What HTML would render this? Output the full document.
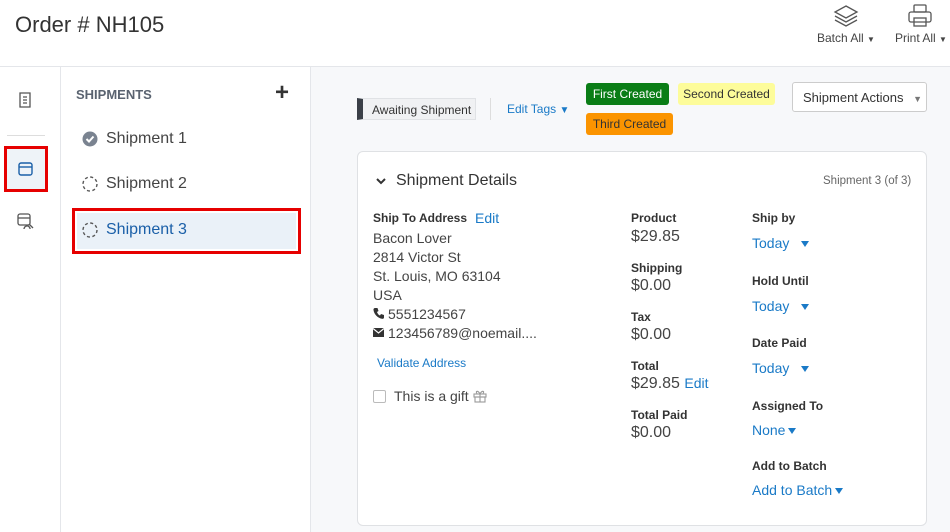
<!DOCTYPE html>
<html><head><style>
*{box-sizing:border-box;margin:0;padding:0}
body{width:950px;height:532px;overflow:hidden;font-family:"Liberation Sans",Arial,sans-serif;background:#fff;position:relative;color:#333}
.a{position:absolute}
.blue{color:#1a7ac7}
.lbl{font-size:12px;font-weight:bold;color:#333}
.val{font-size:16px;color:#444}
.tri{display:inline-block;width:0;height:0;border-left:4px solid transparent;border-right:4px solid transparent;border-top:6px solid #1a7ac7;vertical-align:middle;margin-left:6px}
</style></head><body>
<div class="a" style="left:15px;top:12px;font-size:22px;color:#333">Order # NH105</div>
<svg class="a" style="left:833px;top:3px" width="26" height="26" viewBox="0 0 26 26" fill="none" stroke="#555" stroke-width="1.3"><path d="M13 3L24 9L13 15L2 9Z"/><path d="M2 13L13 19L24 13"/><path d="M2 17L13 23L24 17"/></svg>
<div class="a" style="left:817px;top:31px;font-size:12px;color:#444">Batch All <span style="font-size:8px">▼</span></div>
<svg class="a" style="left:907px;top:3px" width="26" height="26" viewBox="0 0 26 26" fill="none" stroke="#555" stroke-width="1.3"><rect x="7" y="2" width="12" height="7" rx="1"/><rect x="2" y="9" width="22" height="10" rx="2"/><rect x="7" y="15" width="12" height="8"/></svg>
<div class="a" style="left:895px;top:31px;font-size:12px;color:#444">Print All <span style="font-size:8px">▼</span></div>
<div class="a" style="left:0;top:66px;width:950px;height:1px;background:#e4e6ea"></div>
<div class="a" style="left:60px;top:67px;width:1px;height:465px;background:#e4e6ea"></div>
<div class="a" style="left:310px;top:67px;width:640px;height:465px;background:#f7f8fa;border-left:1px solid #e4e6ea"></div>
<svg class="a" style="left:18px;top:92px" width="14" height="16" viewBox="0 0 14 16" fill="none" stroke="#555" stroke-width="1.3"><path d="M2 1H12V15H2Z"/><path d="M5 5H9M5 8H9M5 11H9"/></svg>
<div class="a" style="left:7px;top:135px;width:38px;height:1px;background:#ddd"></div>
<div class="a" style="left:4px;top:146px;width:44px;height:46px;border:3px solid #e60000;background:#eef3f8"></div>
<svg class="a" style="left:18px;top:162px" width="15" height="14" viewBox="0 0 15 14" fill="none" stroke="#1a5fa8" stroke-width="1.4"><rect x="1" y="1" width="13" height="12" rx="2"/><path d="M1 5H14"/></svg>
<svg class="a" style="left:17px;top:213px" width="17" height="16" viewBox="0 0 17 16" fill="none" stroke="#555" stroke-width="1.3"><rect x="1" y="1" width="12" height="11" rx="2"/><path d="M1 5H13"/><path d="M16 15L12 11M10 13a3 3 0 1 0 0.1 0"/></svg>
<div class="a" style="left:76px;top:87px;font-size:13px;font-weight:bold;color:#5a6370">SHIPMENTS</div>
<div class="a" style="left:275px;top:80px;font-size:24px;font-weight:bold;color:#333;line-height:26px">+</div>
<svg class="a" style="left:82px;top:131px" width="16" height="16"><circle cx="8" cy="8" r="7.5" fill="#7a8390"/><path d="M4.5 8L7 10.5L11.5 5.5" stroke="#fff" stroke-width="2" fill="none"/></svg>
<div class="a" style="left:106px;top:130px;font-size:16px;color:#444">Shipment 1</div>
<svg class="a" style="left:82px;top:176px" width="16" height="16"><circle cx="8" cy="8" r="7" fill="none" stroke="#555" stroke-width="1.4" stroke-dasharray="3 2.5"/></svg>
<div class="a" style="left:106px;top:175px;font-size:16px;color:#444">Shipment 2</div>
<div class="a" style="left:72px;top:208px;width:229px;height:46px;border:3px solid #e60000;background:#fff"><div style="margin:2px;height:36px;background:#eaf1f8"></div></div>
<svg class="a" style="left:82px;top:222px" width="16" height="16"><circle cx="8" cy="8" r="7" fill="none" stroke="#555" stroke-width="1.4" stroke-dasharray="3 2.5"/></svg>
<div class="a" style="left:106px;top:221px;font-size:16px;color:#1a5fa8">Shipment 3</div>
<div class="a" style="left:357px;top:98px;width:119px;height:22px;background:#f0f1f3;border:1px solid #e0e2e5;border-left:6px solid #3a3f47;font-size:12px;color:#333;padding:4px 0 0 9px">Awaiting Shipment</div>
<div class="a" style="left:490px;top:98px;width:1px;height:22px;background:#ddd"></div>
<div class="a blue" style="left:507px;top:102px;font-size:12px">Edit Tags <span style="font-size:10px">▼</span></div>
<div class="a" style="left:586px;top:83px;width:83px;height:22px;background:#0a7d16;border-radius:3px;color:#fff;font-size:12px;text-align:center;line-height:22px">First Created</div>
<div class="a" style="left:678px;top:83px;width:97px;height:22px;background:#fdfc9a;border-radius:3px;color:#333;font-size:12px;text-align:center;line-height:22px">Second Created</div>
<div class="a" style="left:586px;top:113px;width:87px;height:22px;background:#fb9400;border-radius:3px;color:#333;font-size:12px;text-align:center;line-height:22px">Third Created</div>
<div class="a" style="left:792px;top:82px;width:135px;height:30px;background:#fff;border:1px solid #ccc;border-radius:3px;font-size:13px;color:#333;padding:7px 0 0 10px">Shipment Actions <span style="font-size:9px;color:#777;margin-left:6px">▼</span></div>
<div class="a" style="left:357px;top:151px;width:570px;height:375px;background:#fff;border:1px solid #dfe1e4;border-radius:6px"></div>
<svg class="a" style="left:375px;top:177px" width="12" height="9"><path d="M2 2L6 6L10 2" stroke="#333" stroke-width="2" fill="none"/></svg>
<div class="a" style="left:396px;top:172px;font-size:16px;color:#333">Shipment Details</div>
<div class="a" style="left:823px;top:175px;font-size:11.5px;color:#666">Shipment 3 (of 3)</div>
<div class="a lbl" style="left:373px;top:211px">Ship To Address</div>
<div class="a blue" style="left:475px;top:210px;font-size:14px">Edit</div>
<div class="a" style="left:373px;top:229px;font-size:14px;color:#444;line-height:19px">Bacon Lover<br>2814 Victor St<br>St. Louis, MO 63104<br>USA<br><span style="display:inline-block;width:15px"></span>5551234567<br><span style="display:inline-block;width:15px"></span>123456789@noemail....</div>
<svg class="a" style="left:373px;top:307px" width="11" height="12" viewBox="0 0 11 12"><path d="M2 1L4.5 1L5.5 4L4 5C4.8 7 5.5 7.8 7 8.5L8 7L11 8L11 10.5C11 11.5 10 12 9 11.8C4.5 11 1 7 0.5 3C0.3 2 1 1 2 1Z" fill="#333"/></svg>
<svg class="a" style="left:373px;top:328px" width="11" height="9" viewBox="0 0 11 9"><rect x="0" y="0" width="11" height="9" fill="#333"/><path d="M0 0.5L5.5 5L11 0.5" stroke="#fff" stroke-width="1.2" fill="none"/></svg>
<div class="a blue" style="left:377px;top:356px;font-size:12px">Validate Address</div>
<div class="a" style="left:373px;top:390px;width:13px;height:13px;border:1px solid #bbb;border-radius:2px"></div>
<div class="a" style="left:394px;top:388px;font-size:14px;color:#444">This is a gift</div>
<svg class="a" style="left:473px;top:389px" width="14" height="14" viewBox="0 0 14 14" fill="none" stroke="#999" stroke-width="1.1"><rect x="1" y="5" width="12" height="3"/><rect x="2" y="8" width="10" height="5"/><path d="M7 5V13M7 5C5 1 2 2 4 4.5M7 5C9 1 12 2 10 4.5"/></svg>
<div class="a lbl" style="left:631px;top:211px">Product</div>
<div class="a val" style="left:631px;top:228px">$29.85</div>
<div class="a lbl" style="left:631px;top:261px">Shipping</div>
<div class="a val" style="left:631px;top:277px">$0.00</div>
<div class="a lbl" style="left:631px;top:310px">Tax</div>
<div class="a val" style="left:631px;top:326px">$0.00</div>
<div class="a lbl" style="left:631px;top:359px">Total</div>
<div class="a val" style="left:631px;top:375px">$29.85 <span class="blue" style="font-size:14px">Edit</span></div>
<div class="a lbl" style="left:631px;top:408px">Total Paid</div>
<div class="a val" style="left:631px;top:424px">$0.00</div>
<div class="a lbl" style="left:752px;top:211px">Ship by</div>
<div class="a blue" style="left:752px;top:235px;font-size:14px">Today <span class="tri" style="margin-left:8px"></span></div>
<div class="a lbl" style="left:752px;top:274px">Hold Until</div>
<div class="a blue" style="left:752px;top:298px;font-size:14px">Today <span class="tri" style="margin-left:8px"></span></div>
<div class="a lbl" style="left:752px;top:336px">Date Paid</div>
<div class="a blue" style="left:752px;top:360px;font-size:14px">Today <span class="tri" style="margin-left:8px"></span></div>
<div class="a lbl" style="left:752px;top:399px">Assigned To</div>
<div class="a blue" style="left:752px;top:422px;font-size:14px">None<span class="tri" style="margin-left:3px"></span></div>
<div class="a lbl" style="left:752px;top:459px">Add to Batch</div>
<div class="a blue" style="left:752px;top:482px;font-size:14px">Add to Batch<span class="tri" style="margin-left:3px"></span></div>
</body></html>
